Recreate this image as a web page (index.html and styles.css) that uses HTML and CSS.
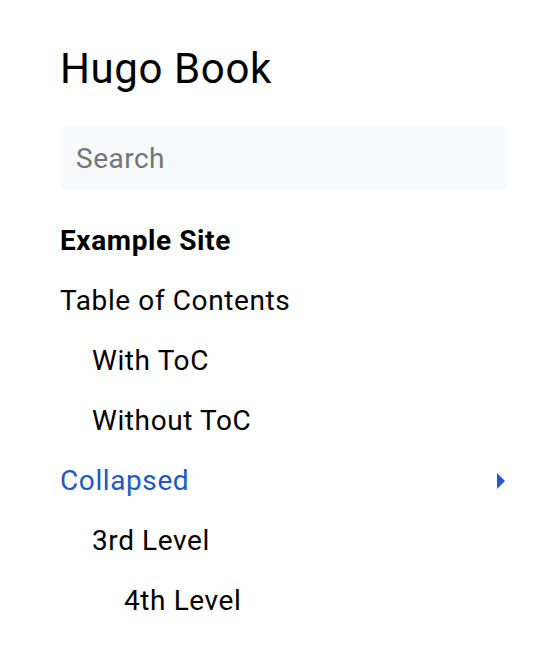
FILE: index.html
```html
<!DOCTYPE html>
<html lang="en">
<head>
<meta charset="utf-8">
<title>Hugo Book</title>
<link rel="stylesheet" href="styles.css">
</head>
<body>
<nav class="menu">
  <h2 class="brand">Hugo Book</h2>
  <div class="search">
    <input class="search-input" type="text" placeholder="Search">
  </div>
  <ul class="tree">
    <li class="item"><span class="section">Example Site</span></li>
    <li class="item"><a class="link">Table of Contents</a>
      <ul class="tree sub">
        <li class="item"><a class="link">With ToC</a></li>
        <li class="item"><a class="link">Without ToC</a></li>
      </ul>
    </li>
    <li class="item"><a class="link active toggle">Collapsed<span class="caret"></span></a>
      <ul class="tree sub">
        <li class="item"><a class="link">3rd Level</a>
          <ul class="tree sub">
            <li class="item"><a class="link">4th Level</a></li>
          </ul>
        </li>
      </ul>
    </li>
  </ul>
</nav>
</body>
</html>
```
FILE: styles.css
```css
* { box-sizing: border-box; }
html, body {
  margin: 0;
  padding: 0;
  background: #fff;
}
body {
  font-family: Roboto, "Liberation Sans", sans-serif;
  font-size: 28px;
  line-height: 36px;
  color: #000;
  letter-spacing: 0.6px;
}
.menu {
  width: 508px;
  padding: 39px 0 0 60px;
}
.brand {
  margin: 0;
  font-size: 42px;
  font-weight: 400;
  line-height: 60px;
}
.search {
  margin-top: 27px;
}
.search-input {
  display: block;
  width: 100%;
  height: 64px;
  border: 0;
  border-radius: 6px;
  background: #f8f9fa;
  padding: 0 16px;
  font-family: inherit;
  font-size: 28px;
  letter-spacing: 0.5px;
  color: #000;
  outline: none;
}
.search-input::placeholder { color: #757575; }
.tree {
  list-style: none;
  margin: 0;
  padding: 0;
}
.menu > .tree { margin-top: 33px; }
.tree.sub {
  padding-left: 32px;
  margin-top: 24px;
}
.item { margin-bottom: 24px; }
.item:last-child { margin-bottom: 0; }
.menu > .tree > .item:last-child { margin-bottom: 24px; }
.section { font-weight: 700; display: block; }
.link {
  display: block;
  color: #000;
  text-decoration: none;
}
.link.active { color: #2258c4; }
.toggle {
  display: flex;
  justify-content: space-between;
  align-items: center;
}
.caret {
  width: 0;
  height: 0;
  border-top: 8px solid transparent;
  border-bottom: 8px solid transparent;
  border-left: 8px solid #2258c4;
  margin-right: 3px;
}
```
